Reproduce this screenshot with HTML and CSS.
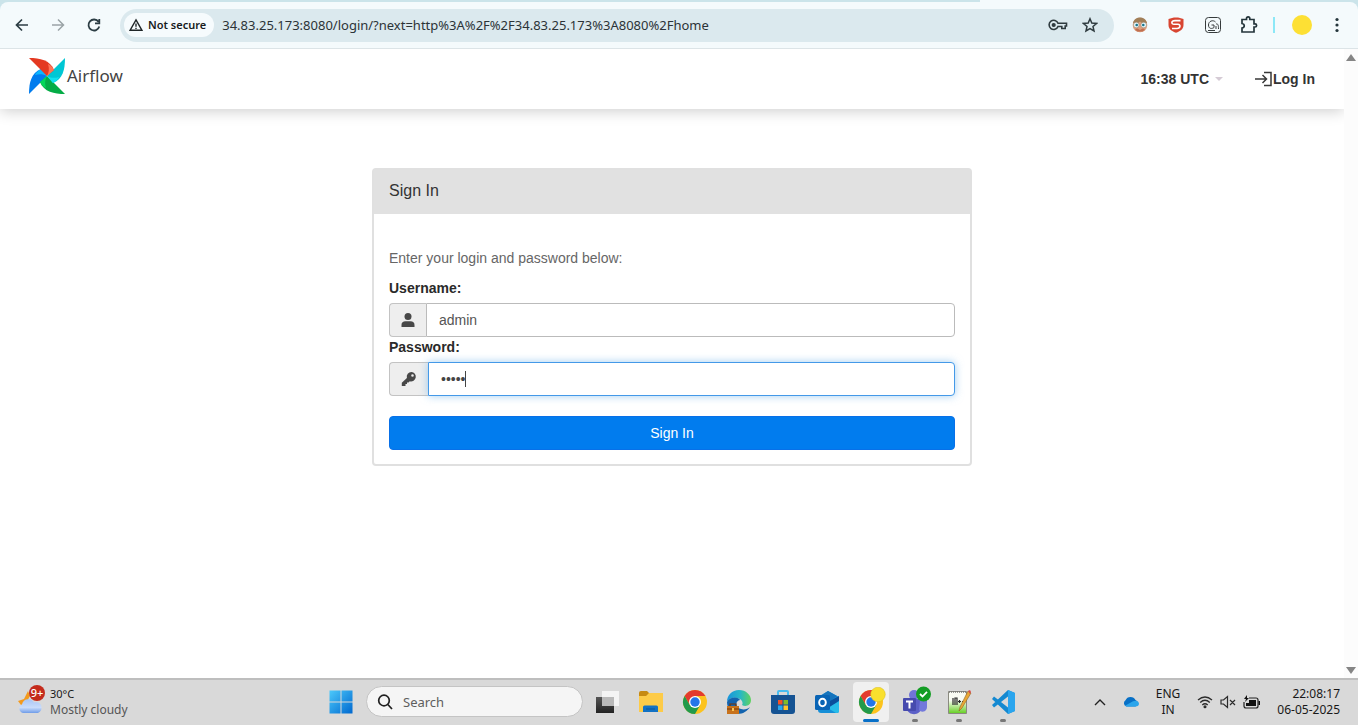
FILE: index.html
```html
<!DOCTYPE html>
<html lang="en">
<head>
<meta charset="utf-8">
<title>Sign In - Airflow</title>
<link rel="stylesheet" href="styles.css">
</head>
<body>
<header class="browser">
  <div class="toolbar">
    <nav class="nav-buttons" aria-label="Browser navigation">
      <button class="icon-button" aria-label="Back"><svg width="16" height="16" viewBox="0 0 16 16" fill="none" stroke="#2c3d44" stroke-width="1.700"><path d="M14 8H3M8 2.500L2.500 8L8 13.500"/></svg></button>
      <button class="icon-button" aria-label="Forward"><svg width="16" height="16" viewBox="0 0 16 16" fill="none" stroke="#9aa3a6" stroke-width="1.500"><path d="M2 8H13M8 2.500L13.500 8L8 13.500"/></svg></button>
      <button class="icon-button" aria-label="Reload"><svg width="16" height="16" viewBox="0 0 16 16" fill="none" stroke="#2c3d44" stroke-width="1.800"><path d="M13.300 9.500A5.500 5.500 0 1 1 12.500 4.800M13.300 2V6.300H9"/></svg></button>
    </nav>
    <div class="address">
      <button class="chip"><svg width="14" height="14" viewBox="0 0 14 14" fill="none" stroke="#1f2527" stroke-width="1.400"><path d="M7 1.800L13 12.300H1ZM7 5.500V8.800M7 9.800V11"/></svg>Not secure</button>
      <input class="url" type="text" aria-label="Address" value="34.83.25.173:8080/login/?next=http%3A%2F%2F34.83.25.173%3A8080%2Fhome">
      <button class="icon-button address-icon" aria-label="Passwords"><svg width="20" height="12" viewBox="0 0 20 12" fill="none" stroke="#2f3b3f" stroke-width="1.600"><path d="M10 4.200H18.500V7H17.200V9.500H13.800V7.500H10A4.600 4.600 0 1 1 10 4.200Z"/><circle cx="5.700" cy="6" r="1.300" fill="#2f3b3f"/></svg></button>
      <button class="icon-button address-icon" aria-label="Bookmark"><svg width="16" height="16" viewBox="0 0 16 16" fill="none" stroke="#2f3b3f" stroke-width="1.500"><path d="M8 1.800L9.800 6.100L14.500 6.500L11 9.500L12 14L8 11.600L4 14L5 9.500L1.500 6.500L6.200 6.100Z"/></svg></button>
    </div>
    <div class="extensions">
      <button class="icon-button" aria-label="Avatar extension"><svg width="16" height="16" viewBox="0 0 16 16"><circle cx="8" cy="8" r="7.300" fill="#dda080"/><path d="M1 6C2 2 5 .5 8 .5S14 2 15 6H10L8 4.500L6 6Z" fill="#a17f58"/><path d="M3 12L5.500 11.500L8 13L10.500 11.500L13 12L11 14.500H5Z" fill="#c06f50"/><circle cx="4.300" cy="8" r="2.800" fill="#e8f7fa" stroke="#8f7c66" stroke-width=".5"/><circle cx="11.700" cy="8" r="2.800" fill="#e8f7fa" stroke="#8f7c66" stroke-width=".5"/><circle cx="4.700" cy="8" r="1.300" fill="#16758d"/><circle cx="11.300" cy="8" r="1.300" fill="#16758d"/></svg></button>
      <button class="icon-button" aria-label="Shield extension"><svg width="16" height="16" viewBox="0 0 16 16"><path d="M8 .4C11 .4 13 1 15.500 2V8C15.500 12 12 14.500 8 15.800C4 14.500 .5 12 .5 8V2C3 1 5 .4 8 .4Z" fill="#d84531"/><path d="M12.500 3.600H7C3 3.600 3 7.300 6 7.300H10C13 7.300 12.500 11.500 9 11.500H4" fill="none" stroke="#fff" stroke-width="1.600"/></svg></button>
      <button class="icon-button" aria-label="Capture extension"><svg width="18" height="18" viewBox="0 0 18 18" fill="none" stroke="#363b3c" stroke-width="1"><rect x="1.500" y="1.500" width="15" height="15" rx="3"/><path d="M11.500 6C9 3.500 4.500 5 4.500 9S8 13 10 11.500V9H7.500M12 8C14 7.500 14.500 9 14.500 13M12 10V13M4 14.500H11"/></svg></button>
      <button class="icon-button" aria-label="Extensions"><svg width="18" height="18" viewBox="0 0 18 18" fill="none" stroke="#24353b" stroke-width="1.700"><path d="M2 3.500H6.500V2.500A1.600 1.600 0 0 1 9.800 2.500V3.500H14V7.800H15A1.500 1.500 0 0 1 15 11H14V16H2V12C5 11.500 5 8 2 7.500Z"/></svg></button>
    </div>
    <div class="browser-tools">
      <span class="divider"></span>
      <button class="profile" aria-label="Profile"></button>
      <button class="icon-button" aria-label="Browser menu"><svg width="16" height="16" viewBox="0 0 16 16" fill="#24353b"><circle cx="8" cy="2.500" r="1.600"/><circle cx="8" cy="8" r="1.600"/><circle cx="8" cy="13.500" r="1.600"/></svg></button>
    </div>
  </div>
</header>

<div class="viewport">
  <div class="page">
    <header class="navbar">
      <a class="brand" href="#">
        <svg width="36" height="36" viewBox="0 0 36 36" aria-hidden="true">
          <path d="M0 36C0 25 2 15 12 11L18 18L11 25Z" fill="#017cee"/><path d="M7 15C9 13 10 12 12 11L18 18C14 16 11 15.500 6 17Z" fill="#0cb6ff"/>
          <path d="M36 36C25 36 15 34 11 24L18 18L25 25Z" fill="#04ac46"/><path d="M15 29C13 27 12 26 11 24L18 18C16 22 15.500 25 17 30Z" fill="#04d659"/>
          <path d="M36 0C36 11 34 21 24 25L18 18L25 11Z" fill="#00c7d4"/><path d="M29 21C27 23 26 24 24 25L18 18C22 20 25 20.500 30 19Z" fill="#11e1ee"/>
          <path d="M0 0C11 0 21 2 25 12L18 18L11 11Z" fill="#e43921"/><path d="M21 7C23 9 24 10 25 12L18 18C20 14 20.500 11 19 6Z" fill="#ff7557"/>
        </svg>
        <span>Airflow</span>
      </a>
      <nav class="nav-links">
        <a class="clock" href="#">16:38 UTC<span class="caret"></span></a>
        <a class="login-link" href="#"><svg width="18" height="16" viewBox="0 0 18 16" fill="none" stroke="#383838" stroke-width="1.500"><path d="M0 8H11M7.500 4L11.500 8L7.500 12"/><path d="M9 1.500H16V14.500H9"/></svg>Log In</a>
      </nav>
    </header>
    <main class="content">
      <section class="card">
        <h1 class="card-title">Sign In</h1>
        <form class="card-body">
          <p class="hint">Enter your login and password below:</p>
          <label class="label" for="username">Username:</label>
          <div class="group">
            <span class="addon"><svg width="14" height="14" viewBox="0 0 14 14" fill="#484848"><circle cx="7" cy="3.500" r="3.500"/><path d="M.5 14V12C.5 9.300 2 8.200 4.500 8.200H9.500C12 8.200 13.500 9.300 13.500 12V14Z"/></svg></span>
            <input class="control" id="username" type="text" value="admin">
          </div>
          <label class="label" for="password">Password:</label>
          <div class="group">
            <span class="addon addon-key"><svg width="16" height="16" viewBox="0 0 16 16"><path d="M10.500 1A4.700 4.700 0 1 1 8.800 10.200L7.500 11.500H6V13H4.500V15H.8V11.700L5.900 6.900A4.700 4.700 0 0 1 10.500 1ZM11.500 3.200A1.300 1.300 0 1 0 11.500 5.800A1.300 1.300 0 1 0 11.500 3.200Z" fill="#484848" fill-rule="evenodd"/></svg></span>
            <div class="control-wrap"><input class="control control-active" id="password" type="password" value="admin"><span class="text-cursor"></span></div>
          </div>
          <button class="submit" type="button">Sign In</button>
        </form>
      </section>
    </main>
  </div>
  <div class="scrollbar"><span class="scroll-up"></span><span class="scroll-down"></span></div>
</div>

<footer class="taskbar">
  <button class="weather">
    <span class="weather-icon"><svg width="28" height="30" viewBox="0 0 28 30"><defs><linearGradient id="cloud" x2="0" y2="1"><stop stop-color="#a9c6f6"/><stop offset=".6" stop-color="#c9dcfb"/><stop offset="1" stop-color="#6f9ce8"/></linearGradient></defs><path d="M10 5L12 10L8 17L3 19L0 15L6 13Z" fill="#f39a1d"/><path d="M5 27A4.500 4.500 0 0 1 4 18.500A6.500 6.500 0 0 1 16 16.500A5.300 5.300 0 0 1 20 27Z" fill="url(#cloud)"/></svg><span class="badge">9+</span></span>
    <span class="weather-text"><span>30°C</span><span class="sky">Mostly cloudy</span></span>
  </button>
  <div class="apps">
    <button class="app" aria-label="Start"><svg width="24" height="24" viewBox="0 0 24 24"><defs><linearGradient id="win" x2="1" y2="1"><stop stop-color="#4cc9fb"/><stop offset="1" stop-color="#0068cf"/></linearGradient></defs><path d="M.5.5H11.500V11.500H.5ZM12.500.5H23.500V11.500H12.500ZM.5 12.500H11.500V23.500H.5ZM12.500 12.500H23.500V23.500H12.500Z" fill="url(#win)"/></svg></button>
    <label class="search"><svg width="16" height="16" viewBox="0 0 16 16" fill="none" stroke="#202020" stroke-width="1.700"><circle cx="7" cy="6.500" r="5.300"/><path d="M10.800 10.500L15 15"/></svg><input type="text" placeholder="Search" aria-label="Search"></label>
    <button class="app" aria-label="Task view"><svg width="26" height="26" viewBox="0 0 26 26"><defs><linearGradient id="dark" x2="0" y2="1"><stop stop-color="#555"/><stop offset="1" stop-color="#222"/></linearGradient></defs><rect x="2" y="8" width="18" height="16" fill="url(#dark)"/><rect x="8" y="2" width="17" height="15" fill="#f4f4f4"/><rect x="8" y="8" width="12" height="9" fill="#b9b9b9"/></svg></button>
    <button class="app" aria-label="File Explorer"><svg width="26" height="26" viewBox="0 0 26 26"><path d="M1 4Q1 2 3 2H9L11 4V8H1Z" fill="#c78a13"/><path d="M1 7H8L11 4H25V23H1Z" fill="#fdcb48"/><path d="M5 23V18Q5 16.500 6.500 16.500H18.500Q20 16.500 20 18V23Z" fill="#1372c4"/><path d="M8 20H17" stroke="#0b5499" stroke-width="1"/></svg></button>
    <button class="app" aria-label="Chrome"><svg width="26" height="26" viewBox="0 0 26 26"><circle cx="13" cy="13" r="12" fill="#fcc31e"/><path d="M2.600 7A12 12 0 0 1 23.400 7H13L7.800 16Z" fill="#e33b2e"/><path d="M2.600 7A12 12 0 0 0 13 25L18.200 16H7.800Z" fill="#229a4b"/><circle cx="13" cy="13" r="6" fill="#fff"/><circle cx="13" cy="13" r="4.700" fill="#2375e8"/></svg></button>
    <button class="app" aria-label="Edge"><svg width="26" height="26" viewBox="0 0 26 26"><defs><linearGradient id="edge" x2="1"><stop stop-color="#1894dc"/><stop offset=".55" stop-color="#27b7c6"/><stop offset="1" stop-color="#61d35e"/></linearGradient></defs><path d="M1 13C1 6 6 1 13 1S25 6 25 11C25 17 19 18 16 16C17 15 17 12 14 10C8 7 2 10 1 13Z" fill="url(#edge)"/><path d="M1 13C4 7 13 8 14 11C9 12 9 19 15 20C18 21 22 20 24 18C20 25 9 28 4 21C2 19 1 16 1 13Z" fill="#1363ae"/><path d="M1 17H13V25H1Z" fill="#c8721b"/><path d="M4 17V15H10V17M1 20H13" fill="none" stroke="#71360c" stroke-width="1.200"/><rect x="6" y="19" width="2" height="3" fill="#f9c557"/></svg></button>
    <button class="app" aria-label="Microsoft Store"><svg width="26" height="26" viewBox="0 0 26 26"><path d="M8 8V3Q8 2 9 2H17Q18 2 18 3V8" fill="none" stroke="#48bdf0" stroke-width="2"/><path d="M1 6H25V22Q25 25 22 25H4Q1 25 1 22Z" fill="#155393"/><path d="M8 11H12.500V15.500H8Z" fill="#f45225"/><path d="M13.500 11H18V15.500H13.500Z" fill="#81bc28"/><path d="M8 16.500H12.500V21H8Z" fill="#27a7ef"/><path d="M13.500 16.500H18V21H13.500Z" fill="#ffc329"/></svg></button>
    <button class="app" aria-label="Outlook"><svg width="26" height="26" viewBox="0 0 26 26"><path d="M4 8L14 2L25 8V22Q25 24 23 24H7Q4 24 4 21Z" fill="#168fd7"/><path d="M5 8L14 2L23 7L15 13L8 12Z" fill="#1674bd"/><path d="M25 9L12 18L22 24Q25 24 25 22Z" fill="#28bce9"/><path d="M14 13L25 7V12L14 19Z" fill="#0c4f9c"/><rect x="1" y="6" width="15" height="15" rx="1.500" fill="#0964b5"/><ellipse cx="8.500" cy="13.500" rx="3.300" ry="3.800" fill="none" stroke="#fff" stroke-width="2"/></svg></button>
    <button class="app app-current" aria-label="Chrome, current window"><svg width="30" height="30" viewBox="0 0 30 30"><g transform="translate(2 2)"><circle cx="13" cy="13" r="12" fill="#fcc31e"/><path d="M2.600 7A12 12 0 0 1 23.400 7H13L7.800 16Z" fill="#e33b2e"/><path d="M2.600 7A12 12 0 0 0 13 25L18.200 16H7.800Z" fill="#229a4b"/><circle cx="13" cy="13" r="6" fill="#fff"/><circle cx="13" cy="13" r="4.700" fill="#2375e8"/></g><circle cx="22" cy="7.500" r="7.300" fill="#f9e02e" stroke="#d9bd23" stroke-width=".5"/></svg></button>
    <button class="app app-open" aria-label="Teams"><svg width="32" height="32" viewBox="0 0 32 32"><circle cx="15" cy="9" r="5" fill="#7074d8"/><path d="M8 13H22V22C22 30 9 30 8 23Z" fill="#5b5fc7"/><path d="M21 14H28V21C28 26 22 27 20 24Z" fill="#7379dc"/><rect x="4" y="12" width="13" height="13" rx="1" fill="#464aae"/><path d="M7 15.500H14M10.500 15.500V22.500" stroke="#fff" stroke-width="2"/><circle cx="24.500" cy="8" r="7.500" fill="#139d24"/><path d="M21 8L23.500 10.500L28 5.800" fill="none" stroke="#fff" stroke-width="1.800"/></svg></button>
    <button class="app app-open" aria-label="Notepad++"><svg width="26" height="26" viewBox="0 0 26 26"><defs><linearGradient id="note" x2="0" y2="1"><stop offset=".4" stop-color="#f9fbf3"/><stop offset="1" stop-color="#63cf20"/></linearGradient></defs><path d="M2.500 2.500H20.500V24.500H2.500Z" fill="url(#note)" stroke="#8a8a80"/><path d="M3 3H20" stroke="#777" stroke-width="1.500" stroke-dasharray="1 1"/><path d="M7 16V9M9 16V9H11V16M12 12.500H15M13.500 11V14M16 12.500H19" fill="none" stroke="#262626" stroke-width="1.200"/><path d="M22 2L25 4L16 19L13 22L14 18Z" fill="#eaa735" stroke="#8b6424" stroke-width=".6"/><path d="M22 2L24 1L25 3L24 5Z" fill="#d64e4d"/></svg></button>
    <button class="app app-open" aria-label="Visual Studio Code"><svg width="26" height="26" viewBox="0 0 26 26"><path d="M18 1L25 4V22L18 25L2 10L4 7.500L18 18.500V7.500L4 18.500L2 16Z" fill="#1489d1"/><path d="M18 1L25 4V22L18 25Z" fill="#2aa5ee"/></svg></button>
  </div>
  <div class="tray">
    <button class="tray-button" aria-label="Show hidden icons"><svg width="12" height="8" viewBox="0 0 12 8" fill="none" stroke="#222" stroke-width="1.400"><path d="M1 7L6 2L11 7"/></svg></button>
    <button class="tray-button" aria-label="OneDrive"><svg width="16" height="11" viewBox="0 0 16 11"><path d="M3.500 10.500A3.500 3.500 0 0 1 2.500 4.200A5.500 5.500 0 0 1 12.500 4A3.400 3.400 0 0 1 12.500 10.500Z" fill="#0870c6"/><path d="M2 9.800L10 5.200Q15 3.500 16 7.500Q16 10.500 12.500 10.500H3.500Z" fill="#2ba5eb"/></svg></button>
    <button class="language">ENG<br>IN</button>
    <button class="status" aria-label="Network, sound and battery">
      <svg width="16" height="14" viewBox="0 0 16 14" fill="none" stroke="#2b2b2b" stroke-width="1.300"><path d="M1 5Q8-1 15 5M3.200 7.500Q8 3 12.800 7.500M5.300 10Q8 7.500 10.700 10"/><circle cx="8" cy="11.800" r=".9" fill="#2b2b2b"/></svg>
      <svg width="16" height="14" viewBox="0 0 16 14" fill="none" stroke="#2b2b2b" stroke-width="1.200"><path d="M1 5H3.500L7.500 1.500V12.500L3.500 9H1ZM10 5L15 10M15 5L10 10"/></svg>
      <svg width="17" height="14" viewBox="0 0 17 14"><path d="M6 3H13Q15 3 15 5V11Q15 13 13 13H3Q1 13 1 11V7" fill="none" stroke="#222" stroke-width="1.200"/><path d="M6 5H13V11H3V8H6Z" fill="#111"/><path d="M15.500 6H17V10H15.500ZM4 0L1 4H3L2 7L6 3H4Z" fill="#111"/></svg>
    </button>
    <button class="date">22:08:17<br>06-05-2025</button>
  </div>
</footer>
</body>
</html>
```
FILE: styles.css
```css
* { box-sizing: border-box; }

body {
  display: flex;
  flex-direction: column;
  min-height: 100vh;
  margin: 0;
  background: #fff;
  color: #333;
  font-family: "Liberation Sans", Arial, sans-serif;
  font-size: 14px;
  line-height: 20px;
}

button {
  padding: 0;
  border: 0;
  background: none;
  color: inherit;
  font: inherit;
}

a { color: inherit; text-decoration: none; }
svg { display: block; flex: none; }

/* Browser toolbar */
.browser {
  padding-top: 2px;
  background: linear-gradient(90deg, #cbe4ea 980px, #cbe4ea 980px, #f4fafc 980px, #f4fafc 1140px, #cbe4ea 1140px);
  background: linear-gradient(90deg, #cbe4ea 980px, #f4fafc 980px, #f4fafc 1140px, #cbe4ea 1140px);
  font-family: "Noto Sans", sans-serif;
}

.toolbar {
  display: flex;
  align-items: center;
  height: 47px;
  padding: 0 13px 0 14px;
  border-bottom: 1px solid #dce4e7;
  border-radius: 8px 8px 0 0;
  background: #f4fafc;
}

.nav-buttons { display: flex; gap: 20px; margin-right: 18px; }

.icon-button {
  display: grid;
  place-items: center;
  width: 16px;
  height: 32px;
}

.address {
  display: flex;
  flex: 1;
  align-items: center;
  gap: 8px;
  height: 33px;
  padding: 0 12px 0 4px;
  border-radius: 17px;
  background: #dbe9ee;
}

.chip {
  display: flex;
  align-items: center;
  gap: 5px;
  height: 24px;
  padding: 0 8px 0 5px;
  border-radius: 12px;
  background: #f6fbfd;
  color: #181c1e;
  font-size: 11px;
  font-weight: 600;
}

.url {
  flex: 1;
  min-width: 0;
  padding: 0;
  border: 0;
  background: none;
  color: #2b3337;
  font: 13px/20px "Noto Sans", sans-serif;
}

.address-icon { width: 24px; }

.extensions {
  display: flex;
  gap: 20px;
  margin-left: 18px;
}

.browser-tools {
  display: flex;
  align-items: center;
  gap: 17px;
  margin-left: 17px;
}

.divider { width: 2px; height: 16px; background: #8ce8f7; }
.profile { width: 20px; height: 20px; border-radius: 50%; background: #fde034; }

/* Airflow page */
.viewport { display: flex; flex: 1; }
.page { flex: 1; min-width: 0; overflow: hidden; }

.navbar {
  display: flex;
  align-items: center;
  justify-content: space-between;
  height: 60px;
  padding: 0 29px;
  background: #fff;
  box-shadow: 0 2px 14px rgba(0, 0, 0, 0.2);
}

.brand {
  display: flex;
  align-items: center;
  gap: 2px;
  margin-bottom: 6px;
  color: #444;
  font: 17px/24px "Noto Sans", sans-serif;
}

.nav-links {
  display: flex;
  gap: 32px;
  font-weight: bold;
}

.clock, .login-link { display: flex; align-items: center; }
.clock { gap: 6px; }

.caret {
  border: 4px solid transparent;
  border-top-color: #d5cbd5;
  border-bottom: 0;
}

.content { padding: 59px 16px; }

.card {
  max-width: 600px;
  margin: 0 auto;
  border: 2px solid #e0e0e0;
  border-radius: 4px;
}

.card-title {
  margin: 0;
  padding: 11px 15px 13px;
  background: #e1e1e1;
  font-size: 16px;
  font-weight: normal;
}

.card-body { padding: 34px 15px 14px; }
.hint { margin: 0 0 10px; color: #666; }

.label {
  display: block;
  margin-bottom: 5px;
  color: #2a2a2a;
  font-weight: bold;
}

.group { display: flex; height: 34px; }

.addon {
  display: grid;
  place-items: center;
  width: 37px;
  border: 1px solid #c3c3c3;
  border-right: 0;
  border-radius: 4px 0 0 4px;
  background: #eee;
}

.addon-key { width: 39px; }
.control-wrap { position: relative; display: flex; flex: 1; }

.control {
  flex: 1;
  min-width: 0;
  padding: 6px 12px;
  border: 1px solid #bbb;
  border-radius: 0 4px 4px 0;
  background: #fff;
  color: #555;
  font: 14px/20px "Liberation Sans", Arial, sans-serif;
}

.control-active {
  border-color: #4499e8;
  box-shadow: 0 0 8px rgba(102, 175, 233, 0.6);
  color: #444;
}

.text-cursor {
  position: absolute;
  top: 9px;
  left: 37px;
  width: 1px;
  height: 16px;
  background: #444;
}

.submit {
  display: block;
  width: 100%;
  height: 34px;
  margin-top: 20px;
  border: 1px solid #0870e8;
  border-radius: 4px;
  background: #017cee;
  color: #fff;
}

.scrollbar {
  display: flex;
  flex-direction: column;
  align-items: center;
  justify-content: space-between;
  width: 14px;
  padding: 5px 0 4px;
  background: #fcfcfc;
}

.scroll-up, .scroll-down { border: 5px solid transparent; }
.scroll-up { border-top: 0; border-bottom: 7px solid #858585; }
.scroll-down { border-bottom: 0; border-top: 7px solid #858585; }

/* Desktop taskbar */
.taskbar {
  display: grid;
  grid-template-columns: 1fr auto 1fr;
  align-items: center;
  height: 47px;
  padding: 0 18px 2px;
  border-top: 2px solid #bebebe;
  background: #d9d9d9;
  color: #181818;
  font-family: "Noto Sans", sans-serif;
  font-size: 11px;
  line-height: 16px;
}

.weather { display: flex; gap: 4px; text-align: left; }
.weather-icon { position: relative; }

.badge {
  position: absolute;
  top: -1px;
  left: 11px;
  width: 16px;
  height: 16px;
  border-radius: 50%;
  background: #c42b1c;
  color: #fff;
  font-size: 11px;
  font-weight: 500;
  text-align: center;
}

.weather-text { display: flex; flex-direction: column; }
.sky { color: #555; font-size: 12px; }
.apps { display: flex; align-items: center; padding-right: 14px; }

.app {
  position: relative;
  display: grid;
  place-items: center;
  width: 44px;
  height: 40px;
}

.search {
  display: flex;
  align-items: center;
  gap: 10px;
  width: 217px;
  height: 31px;
  margin: 0 2px 0 3px;
  padding: 0 10px;
  border: 1px solid #c4c4c4;
  border-radius: 16px;
  background: #f5f5f5;
}

.search input {
  flex: 1;
  min-width: 0;
  padding: 0;
  border: 0;
  background: none;
  font: 13px/20px "Noto Sans", sans-serif;
}

.search input::placeholder { color: #5e5e5e; }

.app-current {
  width: 36px;
  margin: 0 4px;
  border-radius: 4px;
  background: #f0f0f0;
}

.app-current::after, .app-open::after {
  content: "";
  position: absolute;
  bottom: 0;
  left: 50%;
  width: 6px;
  height: 3px;
  margin-left: -3px;
  border-radius: 2px;
  background: #777;
}

.app-current::after { width: 16px; margin-left: -8px; background: #0870c8; }

.tray { display: flex; align-items: center; justify-content: flex-end; gap: 17px; font-size: 12px; }
.language { text-align: center; }
.status { display: flex; gap: 7px; }
.date { text-align: right; }
```
